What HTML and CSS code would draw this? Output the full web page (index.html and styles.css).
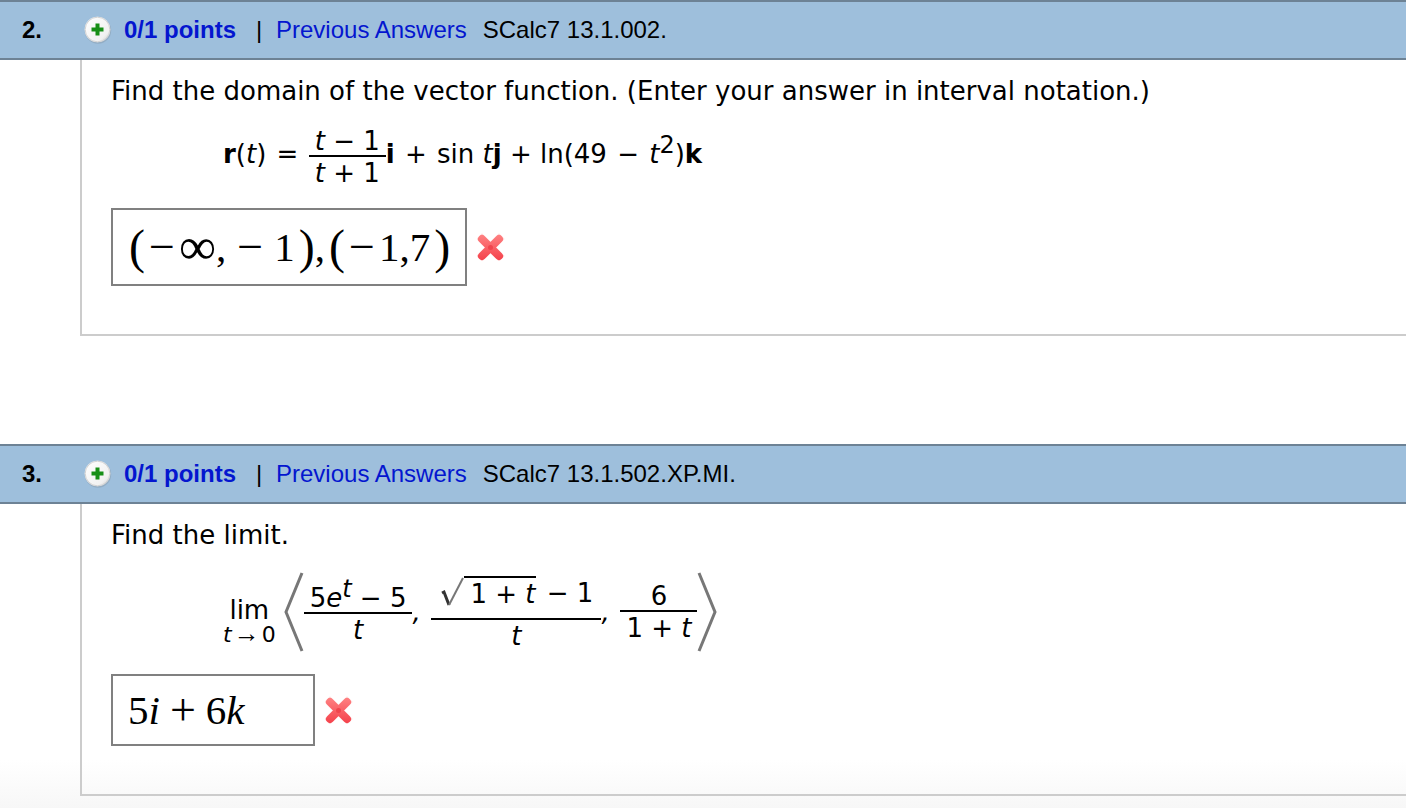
FILE: index.html
```html
<!DOCTYPE html>
<html lang="en">
<head>
<meta charset="utf-8">
<title>Assignment</title>
<link rel="stylesheet" href="styles.css">
</head>
<body>
<svg class="defs" width="0" height="0" aria-hidden="true">
  <defs>
    <linearGradient id="disc" x1="0" y1="0" x2="1" y2="1">
      <stop offset="0" stop-color="#fff"/><stop offset=".75" stop-color="#f1f1f1"/><stop offset="1" stop-color="#c9c9c9"/>
    </linearGradient>
    <linearGradient id="red" x1="0" y1="0" x2="0" y2="28" gradientUnits="userSpaceOnUse">
      <stop offset="0" stop-color="#ff8585"/><stop offset="1" stop-color="#f4404a"/>
    </linearGradient>
    <symbol id="plus" viewBox="0 0 28 28">
      <circle cx="14" cy="14.500" r="13.200" fill="#7d8c99" opacity=".35"/>
      <circle cx="13.500" cy="13.500" r="12.800" fill="url(#disc)"/>
      <circle cx="13.500" cy="13.500" r="12.300" fill="none" stroke="#d2d2d2"/>
      <path d="M11.500 7.500h4v4h4v4h-4v4h-4v-4h-4v-4h4z" fill="#178f17"/>
    </symbol>
    <symbol id="cross" viewBox="0 0 28 28">
      <path d="M5 6L22 23M22 6L5 23" stroke="#fbb" stroke-width="8" stroke-linecap="square" opacity=".4"/>
      <path d="M5 6L22 23M22 6L5 23" stroke="url(#red)" stroke-width="8" stroke-linecap="round"/>
      <circle cx="13.500" cy="14.500" r="2.500" fill="#f0454d"/>
    </symbol>
  </defs>
</svg>
<main>
  <section class="question">
    <header class="bar">
      <span class="number">2.</span>
      <button class="expand" type="button" aria-label="Show details"><svg width="28" height="28"><use href="#plus"/></svg></button>
      <a class="points" href="#">0/1 points</a>
      <span class="divider">|</span>
      <a class="previous" href="#">Previous Answers</a>
      <span>SCalc7 13.1.002.</span>
    </header>
    <div class="body">
      <p class="prompt" id="q2">Find the domain of the vector function. (Enter your answer in interval notation.)</p>
      <div class="formula">
        <span class="line"><b>r</b>(<i>t</i>) <span class="sign">=</span>&nbsp;</span>
        <span class="frac"><span class="num"><i>t</i> − 1</span><span class="den"><i>t</i> + 1</span></span>
        <span class="line"><b>i</b> <span class="sign">+</span> sin <i>t</i><b>j</b> + ln(49 <span class="sign">−</span> <i>t</i><sup>2</sup>)<b>k</b></span>
      </div>
      <div class="answer">
        <div class="field interval" role="textbox" contenteditable="true" spellcheck="false" aria-labelledby="q2"><span class="paren">(</span><span class="neg">−</span><span class="inf">∞</span><span>,</span><span class="op">−</span><span>1</span><span class="paren close">)</span><span class="separator">,</span><span class="paren">(</span><span class="neg">−</span><span>1</span><span>,</span><span>7</span><span class="paren close">)</span></div>
        <svg class="wrong" width="28" height="28" role="img" aria-label="Incorrect"><use href="#cross"/></svg>
      </div>
    </div>
  </section>

  <section class="question">
    <header class="bar">
      <span class="number">3.</span>
      <button class="expand" type="button" aria-label="Show details"><svg width="28" height="28"><use href="#plus"/></svg></button>
      <a class="points" href="#">0/1 points</a>
      <span class="divider">|</span>
      <a class="previous" href="#">Previous Answers</a>
      <span>SCalc7 13.1.502.XP.MI.</span>
    </header>
    <div class="body">
      <p class="prompt" id="q3">Find the limit.</p>
      <div class="formula">
        <span class="limit"><span>lim</span><span class="under"><i>t</i><span class="arrow">→</span>0</span></span>
        <svg class="angle" width="20" height="82" viewBox="0 0 20 82" aria-hidden="true"><path d="M18 2L2 41L18 80"/></svg>
        <span class="frac"><span class="num raised">5<i>e</i><sup><i>t</i></sup> − 5</span><span class="den"><i>t</i></span></span>
        <span class="comma"><i>,</i></span>
        <span class="frac"><span class="num root"><svg class="radical" width="24" height="32" viewBox="0 0 24 32" aria-hidden="true"><path class="tick" d="M2 17L4 16L9 29"/><path class="rise" d="M9 29L23 2"/></svg><span class="radicand">1 + <i>t</i></span><span class="rest">&nbsp;− 1</span></span><span class="den"><i>t</i></span></span>
        <span class="comma"><i>,</i></span>
        <span class="frac"><span class="num">6</span><span class="den">1 + <i>t</i></span></span>
        <svg class="angle" width="20" height="82" viewBox="0 0 20 82" aria-hidden="true"><path d="M2 2L18 41L2 80"/></svg>
      </div>
      <div class="answer">
        <div class="field vector" role="textbox" contenteditable="true" spellcheck="false" aria-labelledby="q3"><span>5</span><i>i</i><span class="sum">+</span><span>6</span><i>k</i></div>
        <svg class="wrong" width="28" height="28" role="img" aria-label="Incorrect"><use href="#cross"/></svg>
      </div>
    </div>
  </section>
</main>
</body>
</html>
```
FILE: styles.css
```css
* { box-sizing: border-box; }
body {
  margin: 0;
  background: #fff;
  color: #000;
  font: 26px/28px "DejaVu Sans", Verdana, sans-serif;
  overflow-x: hidden;
}
main {
  min-height: 100vh;
  background: linear-gradient(to top, #f7f7f7, #fff 48px);
}
.defs { position: absolute; }

.question + .question { margin-top: 108px; }

.bar {
  display: flex;
  align-items: center;
  height: 60px;
  padding-left: 22px;
  background: #9ebfdc;
  border-top: 2px solid #6d8295;
  border-bottom: 2px solid #6d8295;
  font: 24px/28px "Liberation Sans", Arial, sans-serif;
  white-space: nowrap;
}
.number { width: 62px; font-weight: bold; }
.expand {
  display: flex;
  margin: 0 12px 0 0;
  padding: 0;
  border: 0;
  background: none;
}
.bar a { color: #0416cf; text-decoration: none; }
.points { width: 132px; font-weight: bold; }
.divider { width: 20px; }
.previous { margin-right: 16px; }

.body {
  margin-left: 80px;
  padding: 15px 0 48px 29px;
  border-left: 2px solid #ccc;
  border-bottom: 2px solid #ccc;
}
.prompt { margin: 0; line-height: 32px; }

.formula {
  display: flex;
  align-items: center;
  margin: 20px 0 21px 112px;
  white-space: nowrap;
}
.line { padding-bottom: 6px; }
.sign { margin: 0 2px; }
sup { font-size: 24px; line-height: 0; vertical-align: 10px; }

.frac { display: flex; flex-direction: column; text-align: center; }
.num { padding: 0 6px; border-bottom: 2px solid #000; }
.den { padding: 2px 6px 0; }
.raised { padding-top: 4px; }
.root { display: flex; padding: 2px 8px 10px 9px; }
.radical { fill: none; }
.tick { stroke: #333; stroke-width: 3; }
.rise { stroke: #777; stroke-width: 2; }
.radicand {
  padding: 2px 0 0 6px;
  border-top: 2px solid #000;
}
.rest { padding: 3px 0 0 3px; }
.comma { width: 19px; }

.limit {
  display: flex;
  flex-direction: column;
  align-items: center;
  padding-top: 20px;
  margin-right: 8px;
  line-height: 24px;
}
.under { font-size: 22px; }
.arrow {
  margin: 0 2px;
  font: 26px/22px "Liberation Sans", Arial, sans-serif;
}
.angle { fill: none; stroke: #777; stroke-width: 3; }

.answer { display: flex; align-items: center; gap: 10px; }
.field {
  display: flex;
  align-items: center;
  border: 2px solid #808080;
  background: #fff;
  font: 41px/48px "Liberation Serif", "Times New Roman", serif;
  white-space: nowrap;
}
.interval { height: 78px; padding: 0 15px 0 16px; }
.paren { font-size: 48px; }
.close { margin-left: 4px; }
.separator { margin-right: 4px; }
.neg, .op, .sum { font-size: 46px; }
.neg { margin: 0 4px; }
.inf { font-size: 52px; }
.op { margin: 0 11px; }
.vector { width: 204px; height: 72px; padding: 0 15px; }
.sum { margin: 0 10px; }
```
